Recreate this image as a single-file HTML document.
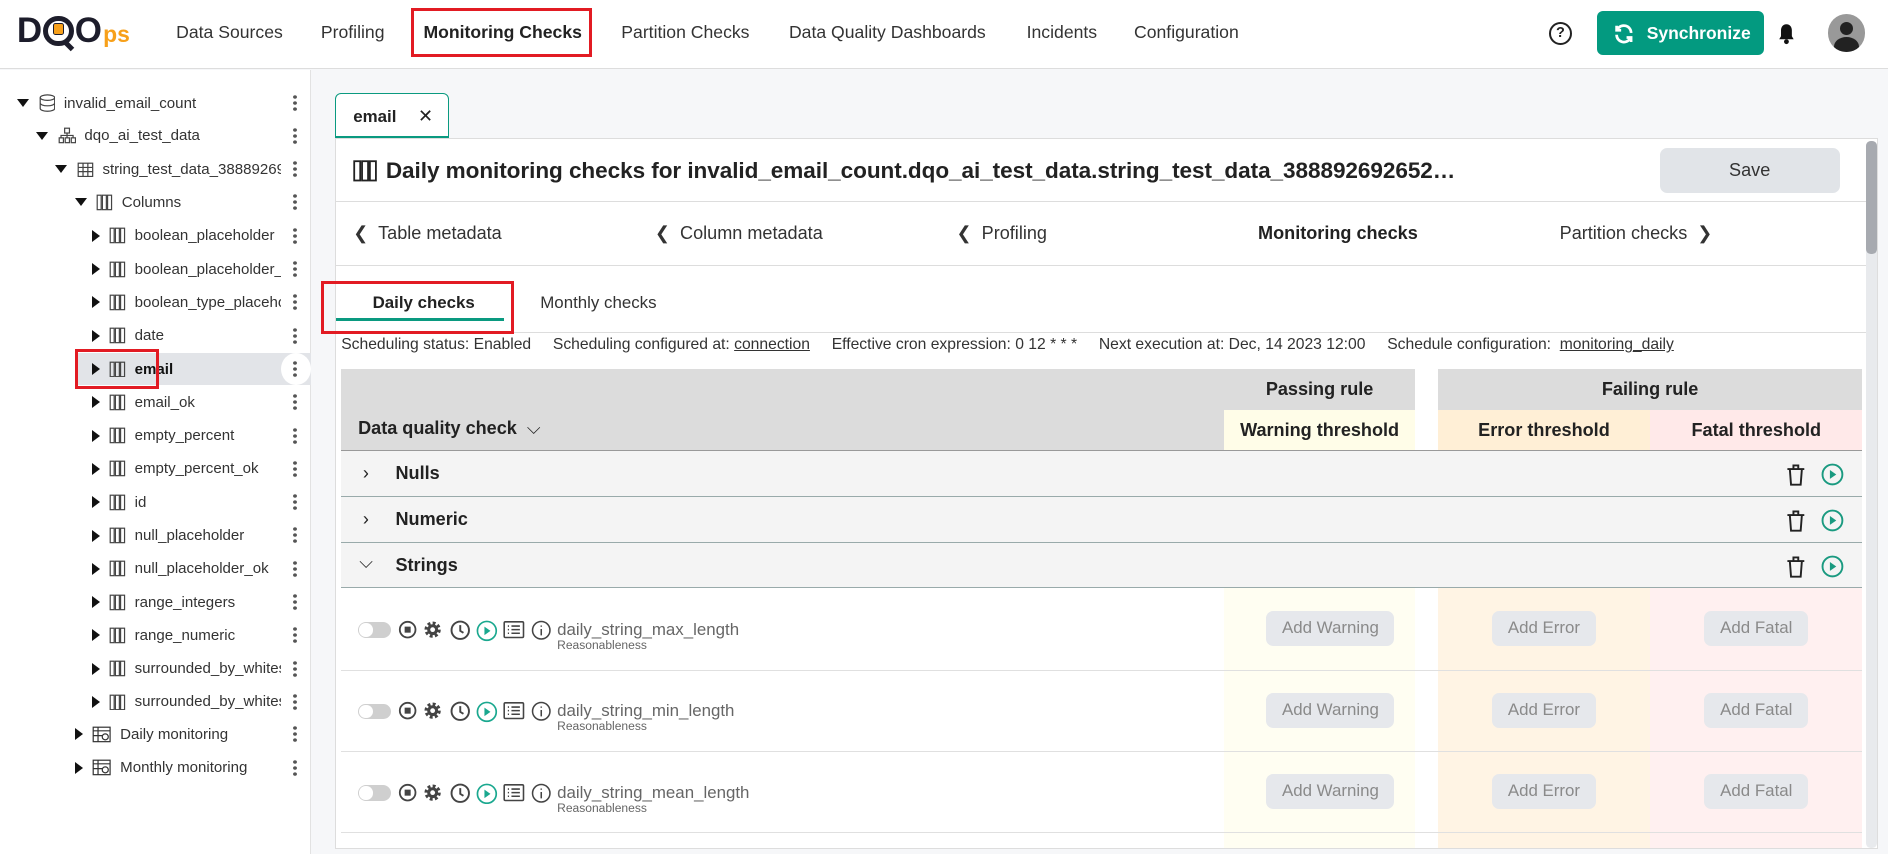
<!DOCTYPE html>
<html><head><meta charset="utf-8"><style>
html{zoom:1.20639}
*{box-sizing:border-box;margin:0;padding:0}
body{width:1565px;height:708px;overflow:hidden;background:#f6f7f9;font-family:"Liberation Sans",Arial,sans-serif;color:#222;position:relative}
.a{position:absolute}
.hdr{left:0;top:0;width:1565px;height:57px;background:#fff;border-bottom:1px solid #ddd}
.nav{top:18px;font-size:14.6px;color:#333}
.side{left:0;top:58px;width:258px;height:650px;background:#fff;border-right:1px solid #e2e2e2}
.tr{position:absolute;height:27px;font-size:12.5px;color:#333;display:flex;align-items:center;white-space:nowrap}
.tr svg,.tr span{flex-shrink:0}
.tri{width:0;height:0;border-left:7px solid #111;border-top:5px solid transparent;border-bottom:5px solid transparent;margin-right:8px}
.trd{width:0;height:0;border-top:7px solid #111;border-left:5px solid transparent;border-right:5px solid transparent;margin-right:8px}
.dots{position:absolute;left:243px;width:3px;height:15px;background:radial-gradient(circle,#555 1.3px,transparent 1.6px) 0 0/3px 5px repeat-y}
.panel{left:278px;top:114px;width:1279px;height:590px;background:#fff;border:1px solid #ddd;overflow:hidden}
.hl{position:absolute;left:0;width:1268px;height:1px;background:#ddd}
.cat{position:absolute;left:4px;width:1261px;height:38px;background:#f4f4f4;border-bottom:1px solid #9aa;font-weight:bold;font-size:15px}
.btn{position:absolute;height:29px;background:#e6e8ec;border-radius:6px;color:#8a8a8a;font-size:14px;text-align:center;line-height:29px}
.row{position:absolute;left:4px;width:1261px;height:68px;border-bottom:1px solid #e0e0e0}
.ic{position:absolute;top:26px}
</style></head><body>
<div class="a hdr"></div>
<div class="a" style="left:14px;top:11px;font-size:29px;font-weight:900;color:#1d1d2b;line-height:30px;white-space:nowrap">D<span style="display:inline-block;width:25px;height:25px;border:4.5px solid #1d1d2b;border-radius:50%;vertical-align:-3px;position:relative;background:#fff;margin:0 1px"><span style="position:absolute;left:4px;top:2px;width:9px;height:10px;background:#f7a01a;border-radius:2px;border:1.5px solid #1d1d2b"></span><span style="position:absolute;left:15px;top:16px;width:4.5px;height:9px;background:#1d1d2b;transform:rotate(-45deg)"></span></span>O<span style="color:#f7a01a;font-size:19px;margin-left:1px">ps</span></div>
<div class="a nav" style="left:146px">Data Sources</div>
<div class="a nav" style="left:266px">Profiling</div>
<div class="a nav" style="left:351px;font-weight:bold;color:#222">Monitoring Checks</div>
<div class="a" style="left:341px;top:7px;width:150px;height:40px;border:3px solid #e21b23"></div>
<div class="a nav" style="left:515px">Partition Checks</div>
<div class="a nav" style="left:654px">Data Quality Dashboards</div>
<div class="a nav" style="left:851px">Incidents</div>
<div class="a nav" style="left:940px">Configuration</div>
<div class="a" style="left:1284px;top:18px;width:19px;height:19px;border:2px solid #222;border-radius:50%;font-size:12px;font-weight:bold;text-align:center;line-height:15px">?</div>
<div class="a" style="left:1324px;top:9px;width:138px;height:37px;background:#039a80;border-radius:5px;color:#fff;font-size:14.5px;font-weight:bold;line-height:37px;padding-left:41px">Synchronize</div>
<svg class="a" style="left:1337px;top:19px" width="18" height="18" viewBox="0 0 24 24" fill="none" stroke="#fff" stroke-width="3"><path d="M20 11A8 8 0 0 0 5 7M4 13a8 8 0 0 0 15 4"/><path d="M4 3v5h5M20 21v-5h-5"/></svg>
<svg class="a" style="left:1474px;top:19px" width="14" height="18" viewBox="0 0 14 18"><path d="M7 1C4 1 2.5 3.5 2.5 6v5L1 13.5h12L11.5 11V6C11.5 3.5 10 1 7 1z" fill="#111"/><circle cx="7" cy="15.5" r="2" fill="#111"/></svg>
<div class="a" style="left:1515px;top:12px;width:31px;height:31px;border-radius:50%;background:#999;overflow:hidden"><div class="a" style="left:10px;top:6px;width:11px;height:11px;border-radius:50%;background:#222"></div><div class="a" style="left:5px;top:19px;width:21px;height:16px;border-radius:50%;background:#222"></div></div>

<div class="a side"></div>
<div id="tree"></div>

<div class="a" style="left:278px;top:77px;width:94px;height:38px;background:#fff;border:1px solid #0a9a80;border-bottom:3px solid #0a9a80;border-radius:5px 5px 0 0;font-size:14px;font-weight:bold;padding:10px 0 0 14px">email <span style="font-weight:normal;margin-left:14px;font-size:15px">✕</span></div>
<div class="a panel">
 <svg class="a" style="left:14px;top:18px" width="20" height="18" viewBox="0 0 20 18" fill="none" stroke="#222" stroke-width="1.5"><rect x="1" y="1" width="5" height="16"/><rect x="7.5" y="1" width="5" height="16"/><rect x="14" y="1" width="5" height="16"/></svg>
 <div class="a" style="left:41px;top:16px;font-size:18.7px;font-weight:bold;color:#222;letter-spacing:-0.05px">Daily monitoring checks for invalid_email_count.dqo_ai_test_data.string_test_data_388892692652…</div>
 <div class="btn" style="left:1097px;top:8px;width:149px;height:37px;line-height:37px;color:#333;font-size:15px;background:#e1e4e8">Save</div>
 <div class="hl" style="top:52px"></div>
 <div class="a" style="left:14px;top:70px;font-size:15px;color:#333">❮&nbsp; Table metadata</div>
 <div class="a" style="left:264px;top:70px;font-size:15px;color:#333">❮&nbsp; Column metadata</div>
 <div class="a" style="left:514px;top:70px;font-size:15px;color:#333">❮&nbsp; Profiling</div>
 <div class="a" style="left:764px;top:70px;font-size:15px;font-weight:bold;color:#222">Monitoring checks</div>
 <div class="a" style="left:1014px;top:70px;font-size:15px;color:#333">Partition checks &nbsp;❯</div>
 <div class="hl" style="top:105px"></div>
 <div class="a" style="left:30px;top:128px;font-size:14px;font-weight:bold">Daily checks</div>
 <div class="a" style="left:0;top:149px;width:139px;height:2px;background:#0a9a80"></div>
 <div class="a" style="left:169px;top:128px;font-size:14px;color:#333">Monthly checks</div>
 <div class="hl" style="top:160px"></div>
 <div class="a" style="left:4px;top:164px;font-size:13px;color:#333;white-space:pre">Scheduling status: Enabled     Scheduling configured at: <u>connection</u>     Effective cron expression: 0 12 * * *     Next execution at: Dec, 14 2023 12:00     Schedule configuration:  <u>monitoring_daily</u></div>
 <div class="a" style="left:4px;top:191px;width:890px;height:68px;background:#dcdcdc"></div>
 <div class="a" style="left:736px;top:191px;width:158px;height:34px;background:#dcdcdc;text-align:center;font-weight:bold;font-size:15px;line-height:34px">Passing rule</div>
 <div class="a" style="left:736px;top:225px;width:158px;height:34px;background:#fffde8;text-align:center;font-weight:bold;font-size:15px;line-height:34px">Warning threshold</div>
 <div class="a" style="left:913px;top:191px;width:352px;height:34px;background:#dcdcdc;text-align:center;font-weight:bold;font-size:15px;line-height:34px">Failing rule</div>
 <div class="a" style="left:913px;top:225px;width:176px;height:34px;background:#ffefd6;text-align:center;font-weight:bold;font-size:15px;line-height:34px">Error threshold</div>
 <div class="a" style="left:1089px;top:225px;width:176px;height:34px;background:#ffe9e9;text-align:center;font-weight:bold;font-size:15px;line-height:34px">Fatal threshold</div>
 <div class="a" style="left:18px;top:232px;font-size:15px;font-weight:bold">Data quality check &nbsp;<span style="font-weight:normal">⌵</span></div>
 <div class="a" style="left:4px;top:258px;width:1261px;height:1px;background:#999"></div>
 <div class="cat" style="top:259px"><span class="a" style="left:18px;top:10px;font-weight:normal">›</span><span class="a" style="left:45px;top:10px">Nulls</span></div>
 <div class="cat" style="top:297px"><span class="a" style="left:18px;top:10px;font-weight:normal">›</span><span class="a" style="left:45px;top:10px">Numeric</span></div>
 <div class="cat" style="top:335px"><span class="a" style="left:15px;top:8px;font-weight:normal">⌵</span><span class="a" style="left:45px;top:10px">Strings</span></div>
 <div class="a" style="left:736px;top:373px;width:158px;height:220px;background:#fffef2"></div>
 <div class="a" style="left:913px;top:373px;width:176px;height:220px;background:#fff4e4"></div>
 <div class="a" style="left:1089px;top:373px;width:176px;height:220px;background:#fff0f0"></div>
 <div id="rows"></div>
 <div class="a" style="left:1268px;top:2px;width:9px;height:586px;background:#e8eaed;border-radius:4px"></div>
 <div class="a" style="left:1268px;top:2px;width:9px;height:94px;background:#a7aab0;border-radius:4px"></div>
</div>
<div class="a" style="left:266px;top:233px;width:160px;height:44px;border:3px solid #e21b23"></div>
<script>
var t=[[14,85,'d','db','invalid_email_count'],[30,112,'d','net','dqo_ai_test_data'],[46,140,'d','tbl','string_test_data_388892692'],[62,167,'d','col','Columns']];
var c=['boolean_placeholder','boolean_placeholder_','boolean_type_placeho','date','email','email_ok','empty_percent','empty_percent_ok','id','null_placeholder','null_placeholder_ok','range_integers','range_numeric','surrounded_by_whites','surrounded_by_whites'];
c.forEach(function(n,i){t.push([76,195+i*27.6,'r','col',n])});
t.push([62,608,'r','cal','Daily monitoring'],[62,636,'r','cal','Monthly monitoring']);
var h='';
var icons={db:'<svg width="14" height="15" viewBox="0 0 14 15" fill="none" stroke="#444"><ellipse cx="7" cy="3" rx="6" ry="2.3"/><path d="M1 3v9c0 1.3 2.7 2.3 6 2.3s6-1 6-2.3V3M1 7.5c0 1.3 2.7 2.3 6 2.3s6-1 6-2.3"/></svg>',
net:'<svg width="15" height="14" viewBox="0 0 15 14" fill="none" stroke="#444"><rect x="5.5" y="1" width="4" height="4"/><rect x="1" y="9" width="3.5" height="4"/><rect x="6" y="9" width="3.5" height="4"/><rect x="11" y="9" width="3.5" height="4"/><path d="M7.5 5v4M2.5 9V7h10v2"/></svg>',
tbl:'<svg width="14" height="13" viewBox="0 0 14 13" fill="none" stroke="#444"><rect x="1" y="1" width="12" height="11"/><path d="M1 4.5h12M1 8h12M5 1v11M9 1v11"/></svg>',
col:'<svg width="14" height="14" viewBox="0 0 14 14" fill="none" stroke="#444"><rect x="1" y="1" width="3.3" height="12"/><rect x="5.3" y="1" width="3.3" height="12"/><rect x="9.6" y="1" width="3.3" height="12"/></svg>',
cal:'<svg width="16" height="14" viewBox="0 0 16 14" fill="none" stroke="#333"><rect x="1" y="1" width="14" height="12"/><path d="M1 4h14M5 1v12M1 8h8"/><circle cx="11" cy="9" r="2.5"/></svg>'};
t.forEach(function(r,i){
 var bold=r[4]=='email'&&r[1]>290&&r[1]<310;
 if(bold)h+='<div class="a" style="left:62px;top:'+(r[1]-13)+'px;width:196px;height:27px;background:#e2e4e8"></div><div class="a" style="left:233px;top:'+(r[1]-13)+'px;width:25px;height:27px;background:#fff;border-radius:50%"></div>';
 h+='<div class="tr" style="left:'+r[0]+'px;top:'+(r[1]-13)+'px;width:'+(233-r[0])+'px;overflow:hidden;'+(bold?'font-weight:bold;color:#111':'')+'"><span class="'+(r[2]=='d'?'trd':'tri')+'"></span>'+icons[r[3]]+'<span style="margin-left:7px">'+r[4]+'</span></div>';
 h+='<div class="dots" style="top:'+(r[1]-7)+'px"></div>';
 if(bold)h+='<div class="a" style="left:62px;top:'+(r[1]-16)+'px;width:70px;height:33px;border:3px solid #e21b23"></div>';
});
document.getElementById('tree').outerHTML=h;
var rw='';
var names=['daily_string_max_length','daily_string_min_length','daily_string_mean_length'];
[0,1,2].forEach(function(i){
 var y=373+i*67.5;
 rw+='<div class="row" style="top:'+y+'px">'+
 '<div class="ic" style="left:14px;top:28px;width:27px;height:13px;border-radius:7px;background:#cfcfcf"><div class="a" style="left:1px;top:1px;width:11px;height:11px;border-radius:50%;background:#fff"></div></div>'+
 '<svg class="ic" style="left:47px" width="16" height="16" viewBox="0 0 16 16"><circle cx="8" cy="8" r="6.5" fill="none" stroke="#444" stroke-width="1.5"/><rect x="5.5" y="5.5" width="5" height="5" fill="#444"/></svg>'+
 '<svg class="ic" style="left:68px" width="16" height="16" viewBox="0 0 16 16"><circle cx="8" cy="8" r="5" fill="none" stroke="#444" stroke-width="3.5" stroke-dasharray="2.2 1.7"/><circle cx="8" cy="8" r="4.5" fill="#444"/><circle cx="8" cy="8" r="2" fill="#fff"/></svg>'+
 '<svg class="ic" style="left:90px" width="17" height="17" viewBox="0 0 16 16" fill="none" stroke="#444" stroke-width="1.5"><circle cx="8" cy="8" r="6.8"/><path d="M8 4v4.5l2.5 1.5"/></svg>'+
 '<svg class="ic" style="left:112px" width="18" height="18" viewBox="0 0 18 18"><circle cx="9" cy="9" r="7.8" fill="none" stroke="#1aa88f" stroke-width="1.4"/><path d="M7 5.5v7l5-3.5z" fill="#1aa88f"/></svg>'+
 '<svg class="ic" style="left:134px" width="18" height="16" viewBox="0 0 18 16" fill="none" stroke="#444" stroke-width="1.3"><rect x="1" y="1.5" width="16" height="13" rx="1"/><path d="M4 5h1M7 5h7M4 8h1M7 8h7M4 11h1M7 11h7"/></svg>'+
 '<svg class="ic" style="left:157px" width="17" height="17" viewBox="0 0 16 16" fill="none" stroke="#444" stroke-width="1.2"><circle cx="8" cy="8" r="6.8"/><path d="M8 7v5M8 4.3v1"/></svg>'+
 '<div class="a" style="left:179px;top:26px;font-size:14px;color:#666">'+names[i]+'</div>'+
 '<div class="a" style="left:179px;top:41px;font-size:10px;color:#666">Reasonableness</div>'+
 '<div class="btn" style="left:767px;top:19px;width:106px">Add Warning</div>'+
 '<div class="btn" style="left:954px;top:19px;width:86px">Add Error</div>'+
 '<div class="btn" style="left:1130px;top:19px;width:86px">Add Fatal</div></div>';
});
[259,297,335].forEach(function(y){
 rw+='<svg class="a" style="left:1201px;top:'+(y+10)+'px" width="18" height="20" viewBox="0 0 18 20" fill="none" stroke="#222" stroke-width="1.6"><path d="M2 5h14M7 5V2h4v3M4 5l1 13h8l1-13"/></svg>'+
 '<svg class="a" style="left:1231px;top:'+(y+10)+'px" width="19" height="19" viewBox="0 0 18 18"><circle cx="9" cy="9" r="7.8" fill="none" stroke="#1a9a80" stroke-width="1.5"/><path d="M7 5.5v7l5-3.5z" fill="#1a9a80"/></svg>';
});
document.getElementById('rows').outerHTML=rw;
</script>
</body></html>
